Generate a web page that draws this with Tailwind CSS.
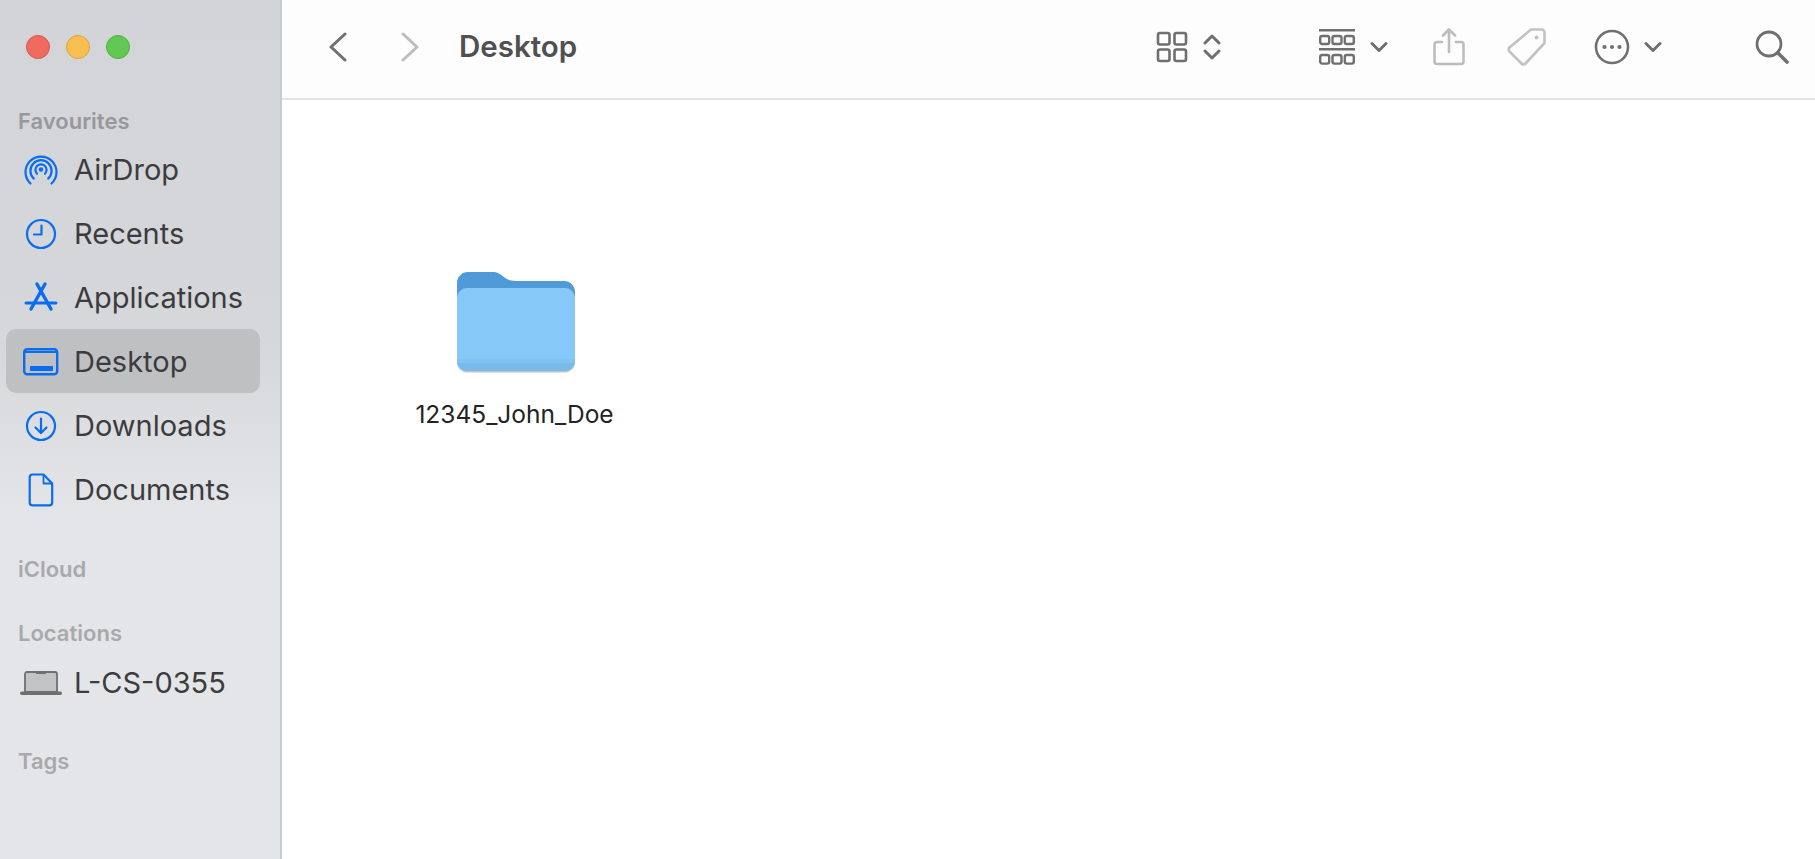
<!DOCTYPE html>
<html lang="en">
<head>
  <meta charset="UTF-8">
  <title>Desktop</title>
  <script src="https://cdn.jsdelivr.net/npm/@tailwindcss/browser@4"></script>
</head>
<body class="bg-white overflow-hidden font-['Inter',sans-serif]">
<div class="flex w-[1815px] h-[859px]">

  <!-- Sidebar -->
  <aside class="w-[282px] h-full shrink-0 pt-[35px] border-r-2 border-[#c9cacc] bg-gradient-to-b from-[#d3d4d7] via-[#d6d7da] via-40% to-[#e4e5e8] to-60%">
    <div class="flex gap-[16px] pl-[26px]">
      <span class="w-[24px] h-[24px] rounded-full bg-[#ef6b60] border border-[#d9564c]"></span>
      <span class="w-[24px] h-[24px] rounded-full bg-[#f6bf4f] border border-[#dfa53a]"></span>
      <span class="w-[24px] h-[24px] rounded-full bg-[#60c853] border border-[#4fb044]"></span>
    </div>

    <h3 class="mt-[50px] pl-[18px] h-[24px] leading-[24px] text-[22px] font-semibold text-[#97989b]">Favourites</h3>
    <ul class="mt-[4px] pl-[6px] text-[#3c3c3e] text-[29px]">
      <li class="flex items-center h-[64px] pt-[2px]">
        <svg class="w-[36px] h-[36px] ml-[17px] mr-[15px] text-[#0a6cf0]" viewBox="0 0 36 36" fill="none" stroke="currentColor" stroke-width="2.2" stroke-linecap="round">
          <path d="M7.5 31.5A15.5 15.5 0 1 1 28.5 31.5"/>
          <path d="M10.8 26.6A10.6 10.6 0 1 1 25.2 26.6"/>
          <path d="M14 21.8A5.6 5.6 0 1 1 22 21.8"/>
          <circle cx="18" cy="17.5" r="2.2" fill="currentColor" stroke="none"/>
        </svg>
        <span>AirDrop</span>
      </li>
      <li class="flex items-center h-[64px] pt-[2px]">
        <svg class="w-[36px] h-[36px] ml-[17px] mr-[15px] text-[#0a6cf0]" viewBox="0 0 36 36" fill="none" stroke="currentColor" stroke-width="2.2" stroke-linecap="round" stroke-linejoin="round">
          <circle cx="18" cy="18" r="14"/>
          <path d="M18.5 9.5V18.5H11"/>
        </svg>
        <span>Recents</span>
      </li>
      <li class="flex items-center h-[64px] pt-[2px]">
        <svg class="w-[36px] h-[36px] ml-[17px] mr-[15px] text-[#0a6cf0]" viewBox="0 0 36 36" fill="none" stroke="currentColor" stroke-width="3.4" stroke-linecap="round">
          <path d="M14 4L28 29"/>
          <path d="M22 4L8 29"/>
          <path d="M3 23H33" stroke-width="3"/>
        </svg>
        <span>Applications</span>
      </li>
      <li class="flex items-center h-[64px] pt-[2px] w-[254px] rounded-[10px] bg-[#bfc0c2]">
        <svg class="w-[36px] h-[36px] ml-[17px] mr-[15px] text-[#0a6cf0]" viewBox="0 0 36 36" fill="none" stroke="currentColor" stroke-width="2.4">
          <rect x="1.2" y="5.2" width="33" height="25" rx="3"/>
          <path d="M1.2 8H34.2" stroke-width="2"/>
          <rect x="7" y="22" width="23" height="5" rx="0.6" fill="currentColor" stroke="none"/>
        </svg>
        <span>Desktop</span>
      </li>
      <li class="flex items-center h-[64px] pt-[2px]">
        <svg class="w-[36px] h-[36px] ml-[17px] mr-[15px] text-[#0a6cf0]" viewBox="0 0 36 36" fill="none" stroke="currentColor" stroke-width="2.2" stroke-linecap="round" stroke-linejoin="round">
          <circle cx="18" cy="18" r="14"/>
          <path d="M18 10.5V24.5"/>
          <path d="M12.5 19.5L18 25L23.5 19.5"/>
        </svg>
        <span>Downloads</span>
      </li>
      <li class="flex items-center h-[64px] pt-[2px]">
        <svg class="w-[36px] h-[36px] ml-[17px] mr-[15px] text-[#0a6cf0]" viewBox="0 0 36 36" fill="none" stroke="currentColor" stroke-width="2.2" stroke-linejoin="round">
          <path d="M9.5 2.5H20.5L29.2 11.5V30.5A2.8 2.8 0 0 1 26.4 33.3H9.5A2.8 2.8 0 0 1 6.7 30.5V5.3A2.8 2.8 0 0 1 9.5 2.5Z"/>
          <path d="M20.5 2.5V11.5H29.2" stroke-width="1.8"/>
        </svg>
        <span>Documents</span>
      </li>
    </ul>

    <h3 class="mt-[36px] pl-[18px] h-[24px] leading-[24px] text-[22px] font-semibold text-[#a8a9ac]">iCloud</h3>
    <h3 class="mt-[40px] pl-[18px] h-[24px] leading-[24px] text-[22px] font-semibold text-[#a8a9ac]">Locations</h3>
    <div class="flex items-center h-[64px] mt-[6px] pl-[20px] text-[#3c3c3e] text-[29px]">
      <svg class="w-[42px] h-[26px] mr-[12px] shrink-0" viewBox="0 0 42 26">
        <path d="M5 22V4A2 2 0 0 1 7 2H35A2 2 0 0 1 37 4V22Z" fill="#c2c3c5" stroke="#6f6f70" stroke-width="1.8"/>
        <rect x="16" y="2" width="10" height="2" fill="#6f6f70"/>
        <rect x="0" y="21.5" width="42" height="3.5" rx="1.7" fill="#6f6f70"/>
      </svg>
      <span>L-CS-0355</span>
    </div>
    <h3 class="mt-[34px] pl-[18px] h-[24px] leading-[24px] text-[22px] font-semibold text-[#a8a9ac]">Tags</h3>
  </aside>

  <!-- Main -->
  <main class="flex-1 flex flex-col min-w-0">
    <header class="flex items-center h-[100px] pb-[5px] pl-[46px] bg-[#fdfdfd] border-b-2 border-[#e3e3e3] text-[#6f6f70]">
      <svg class="w-[20px] h-[30px]" viewBox="0 0 20 30" fill="none" stroke="currentColor" stroke-width="3" stroke-linecap="round" stroke-linejoin="round"><path d="M17 2L3 15L17 28"/></svg>
      <svg class="w-[20px] h-[30px] ml-[52px] text-[#bdbdbd]" viewBox="0 0 20 30" fill="none" stroke="currentColor" stroke-width="3" stroke-linecap="round" stroke-linejoin="round"><path d="M3 2L17 15L3 28"/></svg>
      <h1 class="ml-[39px] w-[120px] text-[29.5px] font-semibold text-[#505050]">Desktop</h1>

      <svg class="w-[32px] h-[32px] ml-[577px]" viewBox="0 0 32 32" fill="none" stroke="currentColor" stroke-width="2.6">
        <rect x="2" y="2" width="11.5" height="11.5" rx="2"/><rect x="18.5" y="2" width="11.5" height="11.5" rx="2"/>
        <rect x="2" y="18.5" width="11.5" height="11.5" rx="2"/><rect x="18.5" y="18.5" width="11.5" height="11.5" rx="2"/>
      </svg>
      <svg class="w-[18px] h-[28px] ml-[15px]" viewBox="0 0 18 28" fill="none" stroke="currentColor" stroke-width="3" stroke-linecap="round" stroke-linejoin="round">
        <path d="M2 10L9 3L16 10"/><path d="M2 18L9 25L16 18"/>
      </svg>

      <svg class="w-[36px] h-[36px] ml-[98px]" viewBox="0 0 36 36" fill="none" stroke="currentColor" stroke-width="2.4">
        <path d="M0 1.2H36M0 20.2H36" stroke-width="2.6"/>
        <rect x="1.2" y="7" width="9" height="8" rx="2"/><rect x="13.5" y="7" width="9" height="8" rx="2"/><rect x="25.8" y="7" width="9" height="8" rx="2"/>
        <rect x="1.2" y="26" width="9" height="8.6" rx="2"/><rect x="13.5" y="26" width="9" height="8.6" rx="2"/><rect x="25.8" y="26" width="9" height="8.6" rx="2"/>
      </svg>
      <svg class="w-[18px] h-[12px] ml-[15px]" viewBox="0 0 18 12" fill="none" stroke="currentColor" stroke-width="3" stroke-linecap="round" stroke-linejoin="round"><path d="M2 2.5L9 9.5L16 2.5"/></svg>

      <svg class="w-[32px] h-[38px] ml-[45px] text-[#bdbdbd]" viewBox="0 0 32 38" fill="none" stroke="currentColor" stroke-width="2.6" stroke-linecap="round" stroke-linejoin="round">
        <path d="M9 14H4A2.5 2.5 0 0 0 1.5 16.5V33.5A2.5 2.5 0 0 0 4 36H28A2.5 2.5 0 0 0 30.5 33.5V16.5A2.5 2.5 0 0 0 28 14H23"/>
        <path d="M16 24V2"/><path d="M10 7.5L16 1.5L22 7.5"/>
      </svg>

      <svg class="w-[40px] h-[40px] ml-[42px] text-[#c2c2c2]" viewBox="0 0 40 40" fill="none" stroke="currentColor" stroke-width="2.6" stroke-linejoin="round">
        <path d="M24 2.5H34.5A3 3 0 0 1 37.5 5.5V16L18.5 36.5A2.8 2.8 0 0 1 14.5 36.5L2.5 24.5A2.8 2.8 0 0 1 2.5 20.5Z"/>
        <circle cx="29.5" cy="10.5" r="2" fill="currentColor" stroke="none"/>
      </svg>

      <svg class="w-[36px] h-[36px] ml-[47px]" viewBox="0 0 36 36" fill="none" stroke="currentColor" stroke-width="2.6">
        <circle cx="18" cy="18" r="16"/>
        <circle cx="10.5" cy="18" r="2.1" fill="currentColor" stroke="none"/><circle cx="18" cy="18" r="2.1" fill="currentColor" stroke="none"/><circle cx="25.5" cy="18" r="2.1" fill="currentColor" stroke="none"/>
      </svg>
      <svg class="w-[18px] h-[12px] ml-[14px]" viewBox="0 0 18 12" fill="none" stroke="currentColor" stroke-width="3" stroke-linecap="round" stroke-linejoin="round"><path d="M2 2.5L9 9.5L16 2.5"/></svg>

      <svg class="w-[34px] h-[34px] ml-[93px]" viewBox="0 0 34 34" fill="none" stroke="currentColor" stroke-width="2.8" stroke-linecap="round">
        <circle cx="14" cy="14" r="12"/><path d="M23 23L32 32" stroke-width="3.6"/>
      </svg>
    </header>

    <section class="flex-1 pt-[171px] pl-[132px]">
      <div class="w-[204px] flex flex-col items-center">
        <svg class="w-[120px] h-[102px]" viewBox="0 0 120 102">
          <path d="M1 12A11 11 0 0 1 12 1H36C42 1 44 3 48 6C52 9 54 10 60 10H108A11 11 0 0 1 119 21V60H1Z" fill="#4f9ad8"/>
          <rect x="1" y="18" width="118" height="83.5" rx="10" fill="#8a8a8a" opacity="0.5"/>
          <rect x="1" y="17" width="118" height="83" rx="10" fill="#86c8f7"/>
          <path d="M1 90V89H119V90A10 10 0 0 1 109 100H11A10 10 0 0 1 1 90Z" fill="#78baec"/>
          <path d="M1 88H119V92H1Z" fill="#82c3f3"/>
        </svg>
        <p class="mt-[26px] -ml-[3px] text-[24.5px] leading-[30px] text-[#232323] whitespace-nowrap">12345_John_Doe</p>
      </div>
    </section>
  </main>
</div>
</body>
</html>
